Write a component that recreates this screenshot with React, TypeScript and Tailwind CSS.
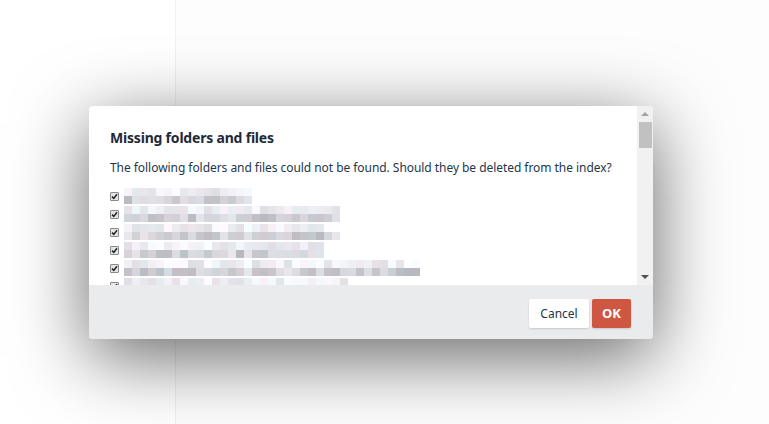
import React from 'react'

// blurred path rows: number of 8px blocks in each line
const rows = [16, 27, 27, 25, 37, 28]

function rand(seed: number) {
  let s = seed
  return () => {
    s = (s * 9301 + 49297) % 233280
    return s / 233280
  }
}

function shade(r: () => number, dark: boolean) {
  const base = dark ? 184 : 222
  const span = dark ? 48 : 32
  const v = Math.round(base + r() * span)
  const tint = Math.round((r() - 0.5) * 12)
  return `rgb(${v + tint}, ${v}, ${Math.min(255, v + 6)})`
}

function Check() {
  return (
    <div className="w-[9px] h-[9px] shrink-0 rounded-[1px] border border-[#8a8a8a] bg-[#e4e4e4] flex items-center justify-center">
      <svg width="7" height="7" viewBox="0 0 7 7">
        <path d="M1 3.6 L2.8 5.4 L6 1.2" stroke="#222" strokeWidth="1.5" fill="none" />
      </svg>
    </div>
  )
}

function BlurRow({ count, seed }: { count: number; seed: number }) {
  const r = rand(seed)
  const top = Array.from({ length: count }, () => shade(r, false))
  const bottom = Array.from({ length: count }, () => shade(r, true))
  return (
    <div className="flex items-center gap-[5px] h-[18px]">
      <Check />
      <div className="flex flex-col">
        <div className="flex">
          {top.map((c, i) => (
            <div key={i} className="w-[8px] h-[8px]" style={{ backgroundColor: c }} />
          ))}
        </div>
        <div className="flex">
          {bottom.map((c, i) => (
            <div key={i} className="w-[8px] h-[8px]" style={{ backgroundColor: c }} />
          ))}
        </div>
      </div>
    </div>
  )
}

export default function App() {
  return (
    <div className="relative w-[769px] h-[424px] overflow-hidden bg-white" style={{ fontFamily: '"Noto Sans", "Open Sans", sans-serif' }}>
      <div className="flex h-full">
        <div className="w-[176px] h-full border-r border-[#f0f0f0]" />
        <div className="flex-1 h-full bg-[#fdfdfd]" />
      </div>

      {/* modal */}
      <div className="absolute left-[89px] top-[106px] w-[564px] h-[233px] rounded-[4px] bg-white flex flex-col overflow-hidden shadow-[0_18px_75px_rgba(0,0,0,0.6)]">
        <div className="flex h-[179px]">
          <div className="flex-1 overflow-hidden pl-[21px] pt-[22px]">
            <h2 className="text-[14px] leading-[20px] font-bold text-[#1e2a38] tracking-[-0.2px]">Missing folders and files</h2>
            <p className="mt-[11px] text-[12px] leading-[18px] text-[#24364a] tracking-[-0.05px]">
              The following folders and files could not be found. Should they be deleted from the index?
            </p>
            <div className="mt-[10px] flex flex-col">
              {rows.map((n, i) => (
                <BlurRow key={i} count={n} seed={i * 37 + 11} />
              ))}
            </div>
          </div>
          {/* scrollbar */}
          <div className="w-[16px] bg-[#f1f1f1] flex flex-col items-center">
            <div className="h-[16px] flex items-center justify-center">
              <div className="w-0 h-0 border-l-[4px] border-r-[4px] border-b-[4px] border-l-transparent border-r-transparent border-b-[#a3a3a3]" />
            </div>
            <div className="w-[13px] h-[26px] bg-[#c1c1c1]" />
            <div className="flex-1" />
            <div className="h-[16px] flex items-center justify-center">
              <div className="w-0 h-0 border-l-[4px] border-r-[4px] border-t-[4px] border-l-transparent border-r-transparent border-t-[#505050]" />
            </div>
          </div>
        </div>
        <div className="flex-1 bg-[#eaebed] flex items-center justify-end gap-[3px] pr-[22px] pt-[3px]">
          <button className="h-[29px] w-[60px] bg-white rounded-[2px] text-[12px] text-[#24364a] shadow-[0_1px_2px_rgba(0,0,0,0.15)]">Cancel</button>
          <button className="h-[29px] w-[39px] bg-[#cf5641] rounded-[2px] text-[13px] font-bold text-white shadow-[0_1px_2px_rgba(0,0,0,0.15)]">OK</button>
        </div>
      </div>
    </div>
  )
}
